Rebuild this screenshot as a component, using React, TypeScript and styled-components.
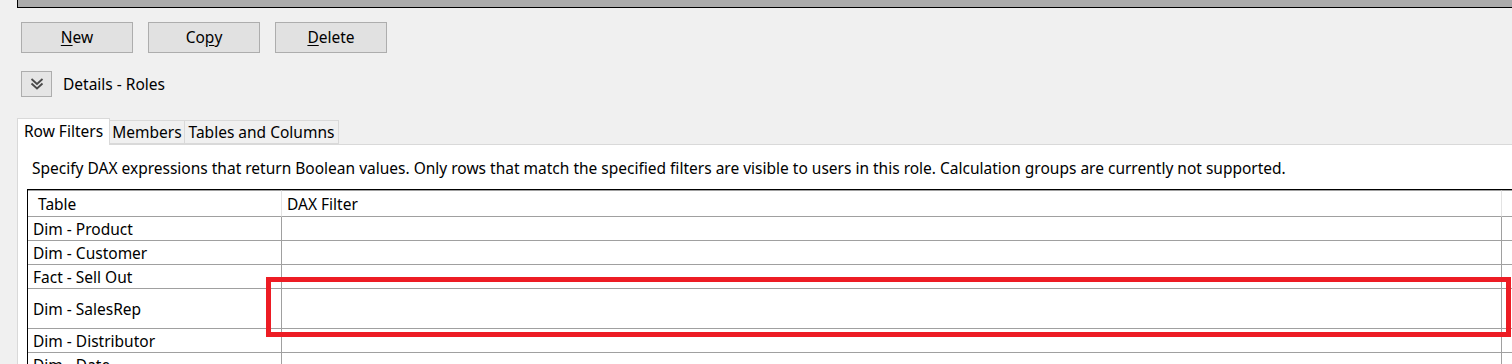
import React from "react";
import styled, { createGlobalStyle } from "styled-components";

const GlobalStyle = createGlobalStyle`
  html, body {
    margin: 0;
    padding: 0;
    background: #f0f0f0;
    overflow: hidden;
  }
  body {
    font-family: "Noto Sans", "Open Sans", sans-serif;
    font-size: 15.5px;
    color: #000;
  }
`;

const rows = [
  { name: "Dim - Product", tall: false },
  { name: "Dim - Customer", tall: false },
  { name: "Fact - Sell Out", tall: false },
  { name: "Dim - SalesRep", tall: true },
  { name: "Dim - Distributor", tall: false },
  { name: "Dim - Date", tall: false },
];

const tabs = [
  { label: "Row Filters", width: 93 },
  { label: "Members", width: 75 },
  { label: "Tables and Columns", width: 154 },
];

const App = () => {
  return (
    <Page>
      <GlobalStyle />
      <TopBar />

      <ButtonRow>
        <Button>
          <u>N</u>ew
        </Button>
        <Button>
          Co<u>p</u>y
        </Button>
        <Button>
          <u>D</u>elete
        </Button>
      </ButtonRow>

      <DetailsRow>
        <Expander>
          <svg width="16" height="14" viewBox="0 0 16 14">
            <path d="M2.5 2 L8 7 L13.5 2" fill="none" stroke="#4a4a4a" strokeWidth="1.8" />
            <path d="M2.5 6.5 L8 11.5 L13.5 6.5" fill="none" stroke="#4a4a4a" strokeWidth="1.8" />
          </svg>
        </Expander>
        <span>Details - Roles</span>
      </DetailsRow>

      <Tabs>
        {tabs.map((t, i) => (
          <Tab key={t.label} active={i === 0} w={t.width}>
            {t.label}
          </Tab>
        ))}
      </Tabs>

      <Panel>
        <Description>
          Specify DAX expressions that return Boolean values. Only rows that match the specified
          filters are visible to users in this role. Calculation groups are currently not
          supported.
        </Description>

        <Grid>
          <HeadCell indent>Table</HeadCell>
          <HeadCell>DAX Filter</HeadCell>
          <HeadCell last />
          {rows.map((r) => (
            <React.Fragment key={r.name}>
              <Cell tall={r.tall}>{r.name}</Cell>
              <Cell tall={r.tall} />
              <Cell tall={r.tall} last />
            </React.Fragment>
          ))}
          <Highlight />
        </Grid>
      </Panel>
    </Page>
  );
};

export default App;

const Page = styled.div`
  display: flex;
  flex-direction: column;
  width: 1512px;
  height: 364px;
  overflow: hidden;
  > * {
    flex-shrink: 0;
  }
`;

const TopBar = styled.div`
  margin-left: 17px;
  height: 7px;
  background: #ababab;
  border-left: 1px solid #000;
  border-bottom: 1px solid #000;
`;

const ButtonRow = styled.div`
  display: flex;
  gap: 15px;
  margin: 14px 0 0 21px;
`;

const Button = styled.div`
  display: flex;
  align-items: center;
  justify-content: center;
  box-sizing: border-box;
  width: 112px;
  height: 31px;
  background: #e1e1e1;
  border: 1px solid #adadad;
  padding-bottom: 1px;
  u {
    text-underline-offset: 2px;
  }
`;

const DetailsRow = styled.div`
  display: flex;
  align-items: center;
  gap: 11px;
  margin: 18px 0 0 21px;
`;

const Expander = styled.div`
  display: flex;
  align-items: center;
  justify-content: center;
  box-sizing: border-box;
  width: 31px;
  height: 26px;
  background: #e5e5e5;
  border: 1px solid #adadad;
`;

const Tabs = styled.div`
  display: flex;
  align-items: flex-end;
  margin: 21px 0 0 17px;
  height: 26px;
  position: relative;
  z-index: 1;
`;

const Tab = styled.div<{ active?: boolean; w: number }>`
  display: flex;
  align-items: center;
  justify-content: center;
  box-sizing: border-box;
  width: ${(p) => p.w}px;
  height: ${(p) => (p.active ? "27px" : "24px")};
  padding-bottom: ${(p) => (p.active ? "2px" : "1px")};
  margin-bottom: ${(p) => (p.active ? "-1px" : "0")};
  background: ${(p) => (p.active ? "#fff" : "#f0f0f0")};
  border: 1px solid #d9d9d9;
  border-bottom: ${(p) => (p.active ? "none" : "1px solid #d9d9d9")};
  white-space: nowrap;
  & + & {
    border-left: none;
  }
`;

const Panel = styled.div`
  margin-left: 17px;
  background: #fff;
  border-left: 1px solid #d9d9d9;
  border-top: 1px solid #d9d9d9;
  padding: 13px 0 0 9px;
`;

const Description = styled.div`
  height: 20px;
  line-height: 20px;
  padding-left: 5px;
  white-space: nowrap;
`;

const Grid = styled.div`
  position: relative;
  display: grid;
  grid-template-columns: 254px 1220px 40px;
  margin-top: 11px;
  border-top: 1px solid #000;
  border-left: 1px solid #000;
`;

const HeadCell = styled.div<{ indent?: boolean; last?: boolean }>`
  box-sizing: border-box;
  height: 27px;
  display: flex;
  align-items: center;
  padding: 1px 0 0 ${(p) => (p.indent ? "10px" : "5px")};
  border-top: 1px solid #a0a0a0;
  border-bottom: 1px solid #a0a0a0;
  border-right: ${(p) => (p.last ? "none" : "1px solid #e3e3e3")};
  background: #fff;
  white-space: nowrap;
`;

const Cell = styled.div<{ tall?: boolean; last?: boolean }>`
  box-sizing: border-box;
  height: ${(p) => (p.tall ? "40px" : "24px")};
  display: flex;
  align-items: center;
  padding-left: 5px;
  border-bottom: 1px solid #a0a0a0;
  border-right: ${(p) => (p.last ? "none" : "1px solid #a0a0a0")};
  background: #fff;
  white-space: nowrap;
`;

const Highlight = styled.div`
  position: absolute;
  left: 238px;
  top: 87px;
  width: 1245px;
  height: 60px;
  box-sizing: border-box;
  border: 5px solid #ed1c24;
  pointer-events: none;
`;
